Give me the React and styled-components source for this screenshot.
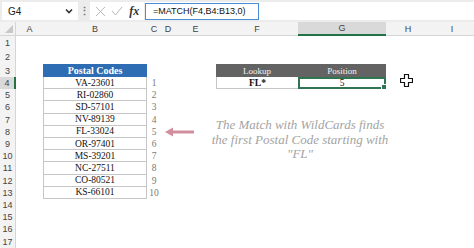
import React from "react";
import styled, { createGlobalStyle, css } from "styled-components";

const GlobalStyle = createGlobalStyle`
  html, body { margin: 0; padding: 0; background: #ffffff; }
  body { width: 474px; height: 248px; overflow: hidden; font-family: "Liberation Sans", Arial, sans-serif; }
`;

const Window = styled.div`
  width: 474px;
  height: 248px;
  display: flex;
  flex-direction: column;
  background: #ffffff;
`;

const FormulaBar = styled.div`
  height: 22px;
  display: flex;
  align-items: center;
  background: #ececec;
  padding: 0 0 0 2px;
  box-sizing: border-box;
`;

const NameBox = styled.div`
  width: 76px;
  height: 18px;
  background: #ffffff;
  display: flex;
  align-items: center;
  justify-content: space-between;
  padding: 0 5px 0 6px;
  box-sizing: border-box;
  font-size: 10px;
  color: #222;
`;

const Dots = styled.div`
  width: 12px;
  text-align: center;
  color: #777;
  font-size: 11px;
  font-weight: bold;
`;

const IconStrip = styled.div`
  height: 18px;
  width: 54px;
  background: #ffffff;
  display: flex;
  align-items: center;
  justify-content: space-around;
  padding: 0 2px;
  box-sizing: border-box;
`;

const Fx = styled.span`
  font-family: "Liberation Serif", "Times New Roman", serif;
  font-style: italic;
  font-weight: bold;
  font-size: 12px;
  color: #333;
`;

const FormulaArea = styled.div`
  flex: 1;
  height: 18px;
  margin-left: 1px;
  background: #ffffff;
  display: flex;
  align-items: center;
`;

const FormulaInput = styled.div`
  width: 114px;
  height: 17px;
  border: 1px solid #4a8fd6;
  box-sizing: border-box;
  display: flex;
  align-items: center;
  padding-left: 7px;
  font-size: 9px;
  color: #111;
  white-space: nowrap;
`;

const Sheet = styled.div`
  position: relative;
  flex: 1;
  display: grid;
  grid-template-columns: 16px 27px 104px 14px 14px 41px 82px 88px 44px 1fr;
  grid-template-rows: 14px 14px 14px 13px repeat(14, 12.2px);
`;

const Corner = styled.div`
  background: #f3f3f3;
  border-right: 1px solid #d6d6d6;
  border-bottom: 1px solid #d6d6d6;
  box-sizing: border-box;
  position: relative;
  &::after {
    content: "";
    position: absolute;
    right: 2px;
    bottom: 2px;
    border-left: 8px solid transparent;
    border-bottom: 8px solid #c8c8c8;
  }
`;

const ColHead = styled.div`
  background: ${p => (p.$active ? "#d9d9d9" : "#f3f3f3")};
  border-bottom: ${p => (p.$active ? "2px solid #217346" : "1px solid #d6d6d6")};
  box-sizing: border-box;
  display: flex;
  align-items: center;
  justify-content: center;
  font-size: 9px;
  color: #444;
`;

const RowHead = styled.div`
  background: ${p => (p.$active ? "#d9d9d9" : "#f3f3f3")};
  border-right: ${p => (p.$active ? "2px solid #217346" : "1px solid #d6d6d6")};
  box-sizing: border-box;
  display: flex;
  align-items: center;
  justify-content: center;
  font-size: 9px;
  color: #444;
`;

const kinds = {
  blank: css``,
  blueHead: css`
    background: #2e6db4;
    color: #ffffff;
    font-weight: bold;
    font-size: 10px;
  `,
  grayHead: css`
    background: #636363;
    color: #f2f2f2;
    font-size: 9px;
  `,
  code: css`
    border-left: 1px solid #c6c6c6;
    border-right: 1px solid #c6c6c6;
    border-bottom: 1px solid #c6c6c6;
  `,
  num: css`
    color: #7a7a7a;
  `,
  lookup: css`
    border-left: 1px solid #c6c6c6;
    border-bottom: 1px solid #c6c6c6;
    font-weight: bold;
  `,
  selected: css`
    border: 2px solid #2f7552;
    position: relative;
  `,
};

const Cell = styled.div`
  box-sizing: border-box;
  display: flex;
  align-items: center;
  justify-content: center;
  font-family: "Liberation Serif", "Times New Roman", serif;
  font-size: 9.5px;
  color: #111;
  white-space: nowrap;
  ${p => kinds[p.$kind || "blank"]}
`;

const FillHandle = styled.span`
  position: absolute;
  right: -3px;
  bottom: -3px;
  width: 4px;
  height: 4px;
  background: #2f7552;
  border: 1px solid #fff;
`;

const Note = styled.div`
  position: absolute;
  left: 200px;
  top: 96px;
  width: 200px;
  text-align: center;
  font-family: "Liberation Serif", "Times New Roman", serif;
  font-style: italic;
  font-size: 13px;
  line-height: 14.5px;
  color: #a3a3a3;
`;

const Arrow = styled.svg`
  position: absolute;
  left: 164px;
  top: 105px;
`;

const Cursor = styled.svg`
  position: absolute;
  left: 400px;
  top: 52px;
`;

const codes = [
  "VA-23601", "RI-02860", "SD-57101", "NV-89139", "FL-33024",
  "OR-97401", "MS-39201", "NC-27511", "CO-80521", "KS-66101",
];
const letters = ["A", "B", "C", "D", "E", "F", "G", "H", "I"];

const cellFor = (row, col) => {
  if (col === "B") {
    if (row === 3) return { kind: "blueHead", text: "Postal Codes" };
    if (row >= 4 && row <= 13) return { kind: "code", text: codes[row - 4] };
  }
  if (col === "C" && row >= 4 && row <= 13) return { kind: "num", text: row - 3 };
  if (col === "F") {
    if (row === 3) return { kind: "grayHead", text: "Lookup" };
    if (row === 4) return { kind: "lookup", text: "FL*" };
  }
  if (col === "G") {
    if (row === 3) return { kind: "grayHead", text: "Position" };
    if (row === 4) return { kind: "selected", text: "5" };
  }
  return { kind: "blank", text: "" };
};

export default function App() {
  const rows = Array.from({ length: 17 }, (_, i) => i + 1);
  return (
    <Window>
      <GlobalStyle />
      <FormulaBar>
        <NameBox>
          <span>G4</span>
          <svg width="8" height="6" viewBox="0 0 8 6">
            <path d="M1 1.5 L4 4.5 L7 1.5" fill="none" stroke="#333" strokeWidth="1.6" />
          </svg>
        </NameBox>
        <Dots>⋮</Dots>
        <IconStrip>
          <svg width="11" height="11" viewBox="0 0 11 11">
            <path d="M1 1 L10 10 M10 1 L1 10" stroke="#b9b9b9" strokeWidth="1" />
          </svg>
          <svg width="12" height="10" viewBox="0 0 12 10">
            <path d="M1 5 L4.5 9 L11 1" fill="none" stroke="#b9b9b9" strokeWidth="1" />
          </svg>
          <Fx>fx</Fx>
        </IconStrip>
        <FormulaArea>
          <FormulaInput>=MATCH(F4,B4:B13,0)</FormulaInput>
        </FormulaArea>
      </FormulaBar>

      <Sheet>
        <Corner />
        {letters.map(l => (
          <ColHead key={l} $active={l === "G"}>{l}</ColHead>
        ))}
        {rows.map(r => (
          <React.Fragment key={r}>
            <RowHead $active={r === 4}>{r}</RowHead>
            {letters.map(l => {
              const c = cellFor(r, l);
              return (
                <Cell key={l} $kind={c.kind}>
                  {c.text}
                  {c.kind === "selected" && <FillHandle />}
                </Cell>
              );
            })}
          </React.Fragment>
        ))}

        <Note>
          The Match with WildCards finds
          <br />
          the first Postal Code starting with
          <br />
          "FL"
        </Note>

        <Arrow width="32" height="10" viewBox="0 0 32 10">
          <path d="M8 5 H30" stroke="#d18e9c" strokeWidth="3" />
          <path d="M1 5 L9 0.5 L9 9.5 Z" fill="#d18e9c" />
        </Arrow>

        <Cursor width="13" height="13" viewBox="0 0 13 13">
          <path
            d="M4.5 0.5 H8.5 V4.5 H12.5 V8.5 H8.5 V12.5 H4.5 V8.5 H0.5 V4.5 H4.5 Z"
            fill="#ffffff"
            stroke="#111"
            strokeWidth="1.2"
          />
        </Cursor>
      </Sheet>
    </Window>
  );
}
